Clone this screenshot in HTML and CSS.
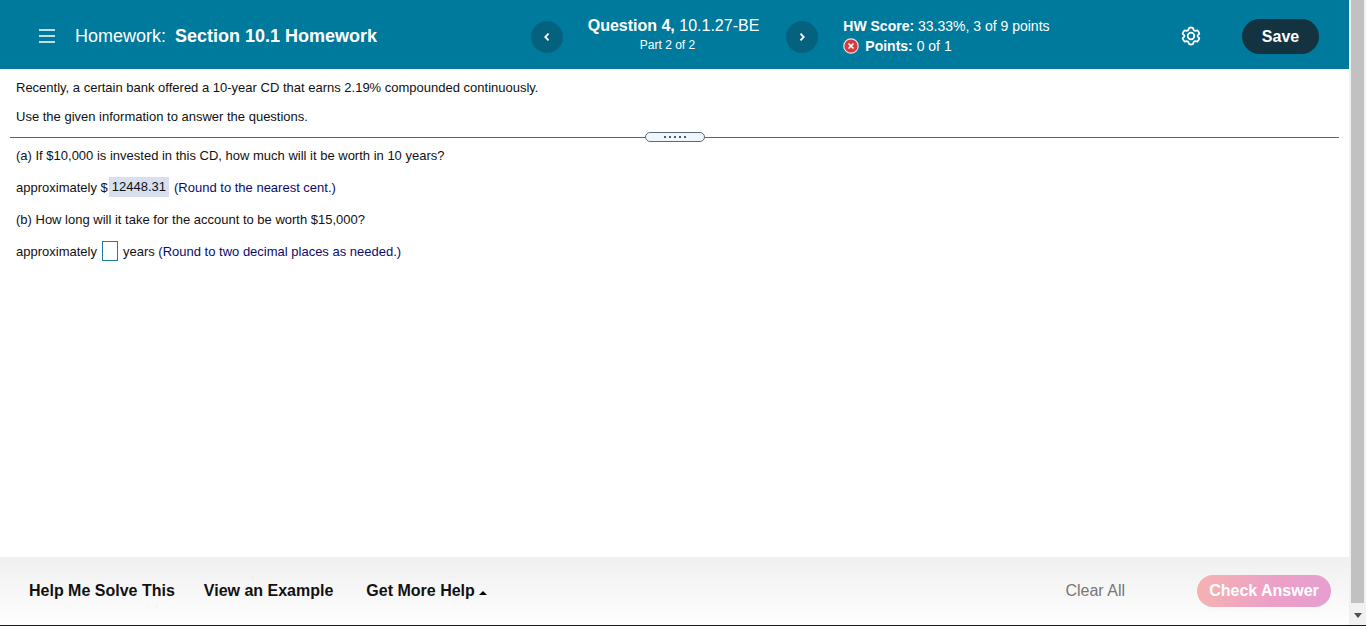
FILE: index.html
```
<!DOCTYPE html>
<html lang="en">

<head>
    <meta charset="utf-8">
    <title>Section 10.1 Homework</title>
    <link rel="stylesheet" href="styles.css">
</head>

<body>
    <div class="page">
        <header class="header">
            <div class="header-left">
                <button type="button" class="icon-button" aria-label="Menu">
                    <svg width="16" height="14" viewBox="0 0 16 14">
                        <path d="M0 1h16M0 7h16M0 13h16" stroke="#fff" stroke-width="1.6" />
                    </svg>
                </button>
                <h1>Homework: <strong>Section 10.1 Homework</strong></h1>
            </div>
            <nav class="question-nav">
                <button type="button" class="round-button" aria-label="Previous question">
                    <svg width="8" height="8" viewBox="0 0 8 8">
                        <path d="M5.5 0.7L2.3 4l3.2 3.3" fill="none" stroke="#fff" stroke-width="1.8" />
                    </svg>
                </button>
                <div class="question">
                    <div class="question-title"><strong>Question 4,</strong> 10.1.27-BE</div>
                    <div class="question-part">Part 2 of 2</div>
                </div>
                <button type="button" class="round-button" aria-label="Next question">
                    <svg width="8" height="8" viewBox="0 0 8 8">
                        <path d="M2.5 0.7L5.7 4L2.5 7.3" fill="none" stroke="#fff" stroke-width="1.8" />
                    </svg>
                </button>
            </nav>
            <div class="header-right">
                <div class="score">
                    <div><strong>HW Score:</strong> 33.33%, 3 of 9 points</div>
                    <div class="points">
                        <svg width="16" height="16" viewBox="0 0 16 16">
                            <circle cx="8" cy="8" r="7.2" fill="#d93a3f" stroke="#f3dfe0" stroke-width="1.2" />
                            <path d="M5.5 5.5l5 5M10.5 5.5l-5 5" stroke="#fff" stroke-width="1.7" />
                        </svg>
                        <span><strong>Points:</strong> 0 of 1</span>
                    </div>
                </div>
                <button type="button" class="icon-button settings" aria-label="Settings">
                    <svg width="20" height="20" viewBox="0 0 20 20" fill="none" stroke="#fff" stroke-width="1.8" stroke-linejoin="round">
                        <path d="M8 2Q10 1 12 2L12.700 4.100L14.200 4.900L16.400 4.400Q18 5.800 18.300 7.800L16.700 9.300V10.700L18.300 12.200Q18 14.200 16.400 15.600L14.200 15.100L12.700 15.900L12 18Q10 19 8 18L7.300 15.900L5.800 15.100L3.600 15.600Q2 14.200 1.700 12.200L3.300 10.700V9.300L1.700 7.800Q2 5.800 3.600 4.400L5.800 4.900L7.300 4.100Z" />
                        <circle cx="10" cy="10" r="3.300" />
                    </svg>
                </button>
                <button type="button" class="save-button">Save</button>
            </div>
        </header>

        <main class="content">
            <section class="intro">
                <p>Recently, a certain bank offered a 10-year CD that earns 2.19% compounded continuously.</p>
                <p>Use the given information to answer the questions.</p>
            </section>
            <div class="divider">
                <button type="button" class="handle" aria-label="Resize panels">
                    <svg width="24" height="2" viewBox="0 0 24 2">
                        <path d="M1 1h2M6 1h2M11 1h2M16 1h2M21 1h2" stroke="#4b5b6b" stroke-width="2" />
                    </svg>
                </button>
            </div>
            <section class="parts">
                <p>(a) If $10,000 is invested in this CD, how much will it be worth in 10 years?</p>
                <p>approximately $<span class="answer">12448.31</span><span class="hint">(Round to the nearest cent.)</span></p>
                <p>(b) How long will it take for the account to be worth $15,000?</p>
                <p><label for="years">approximately</label><input type="text" id="years" class="blank">years <span class="hint">(Round to two decimal places as needed.)</span></p>
            </section>
        </main>

        <footer class="footer">
            <button type="button" class="help">Help Me Solve This</button>
            <button type="button" class="help">View an Example</button>
            <button type="button" class="help more">Get More Help
                <svg width="8" height="4" viewBox="0 0 8 4">
                    <path d="M0 4l4-4 4 4z" />
                </svg>
            </button>
            <button type="button" class="clear-button">Clear All</button>
            <button type="button" class="check-button">Check Answer</button>
        </footer>
    </div>

    <div class="scrollbar">
        <div class="thumb"></div>
        <svg class="arrow" width="8" height="5" viewBox="0 0 8 5">
            <path d="M0 0h8L4 5z" fill="#505050" />
        </svg>
    </div>
</body>

</html>
```

FILE: styles.css
```
* {
    box-sizing: border-box;
}

body {
    margin: 0;
    height: 100vh;
    display: flex;
    font-family: "Liberation Sans", Arial, sans-serif;
    font-size: 13px;
    color: #111;
    background-color: white;
    border-bottom: 1px solid #1c1a1c;
}

button {
    padding: 0;
    border: none;
    background: none;
    font-family: inherit;
    cursor: pointer;
}

svg {
    display: block;
}

.page {
    flex: 1;
    display: flex;
    flex-direction: column;
}

/* header */

.header {
    display: grid;
    grid-template-columns: 1fr auto 1fr;
    align-items: center;
    height: 69px;
    padding: 2px 30px 0;
    background-color: #007a9c;
    color: white;
}

.header-left {
    display: flex;
    align-items: center;
    gap: 20px;
    padding-left: 9px;
}

h1 {
    margin: 0;
    font-size: 18px;
    font-weight: normal;
    line-height: 24px;
}

h1 strong {
    margin-left: 4px;
}

.question-nav {
    display: flex;
    align-items: center;
    gap: 24px;
}

.round-button {
    display: flex;
    align-items: center;
    justify-content: center;
    width: 32px;
    height: 32px;
    margin-top: 2px;
    border-radius: 50%;
    background-color: #05627f;
}

.question {
    padding: 0 3px 2px 1px;
    text-align: center;
}

.question-title {
    font-size: 16px;
    line-height: 20px;
}

.question-part {
    padding-right: 12px;
    font-size: 12px;
    line-height: 18px;
}

.header-right {
    display: flex;
    align-items: center;
    padding-left: 25px;
}

.score {
    font-size: 14px;
    line-height: 20px;
}

.points {
    display: flex;
    align-items: center;
    gap: 6px;
}

.settings {
    margin-left: auto;
    margin-right: 41px;
}

.save-button {
    width: 77px;
    height: 35px;
    margin-top: 2px;
    border-radius: 18px;
    background-color: #143341;
    color: white;
    font-size: 16px;
    font-weight: bold;
}

/* question */

.content {
    flex: 1;
}

.intro,
.parts {
    padding: 0 16px;
}

.intro {
    padding-top: 4px;
}

p {
    margin: 0;
}

.intro p {
    line-height: 29px;
}

.parts p {
    display: flex;
    align-items: center;
    height: 32px;
    white-space: pre;
}

.divider {
    display: flex;
    align-items: center;
    height: 12px;
    margin: 0 10px -4px;
}

.divider::before,
.divider::after {
    content: "";
    flex: 1;
    height: 1px;
    background-color: #53656f;
}

.handle {
    display: flex;
    align-items: center;
    justify-content: center;
    width: 60px;
    height: 10px;
    border: 1px solid #5a6a78;
    border-radius: 5px;
    background-color: #f0f6fa;
}

.answer {
    margin-left: 1px;
    margin-right: 5px;
    padding: 0 3px;
    line-height: 20px;
    background-color: #d8e0f0;
}

.hint {
    color: #0b0b6b;
}

.blank {
    width: 16px;
    height: 20px;
    margin: 0 5px;
    padding: 0;
    border: 1px solid #1b7f99;
    background-color: white;
}

/* footer */

.footer {
    display: flex;
    align-items: center;
    height: 68px;
    padding: 0 18px 0 29px;
    background: linear-gradient(#f0f0f0, #fefefe);
}

.help {
    margin-right: 29px;
    font-size: 16px;
    font-weight: bold;
    line-height: 20px;
    color: #111;
}

.more {
    display: flex;
    align-items: center;
    gap: 4px;
    margin-right: auto;
    margin-left: 4px;
}

.more svg {
    margin-top: 4px;
}

.clear-button {
    margin-right: 72px;
    font-size: 16px;
    line-height: 20px;
    color: #777;
}

.check-button {
    width: 134px;
    height: 32px;
    border-radius: 16px;
    background: linear-gradient(100deg, #f6b3b0, #eda0c6 55%, #e59fd0);
    color: white;
    font-size: 16px;
    font-weight: bold;
}

/* scrollbar */

.scrollbar {
    display: flex;
    flex-direction: column;
    align-items: center;
    width: 17px;
    background-color: #f1f1f1;
}

.thumb {
    flex: 1;
    width: 13px;
    background-color: #c1c1c1;
}

.arrow {
    margin: 10px 0 7px;
}
```
